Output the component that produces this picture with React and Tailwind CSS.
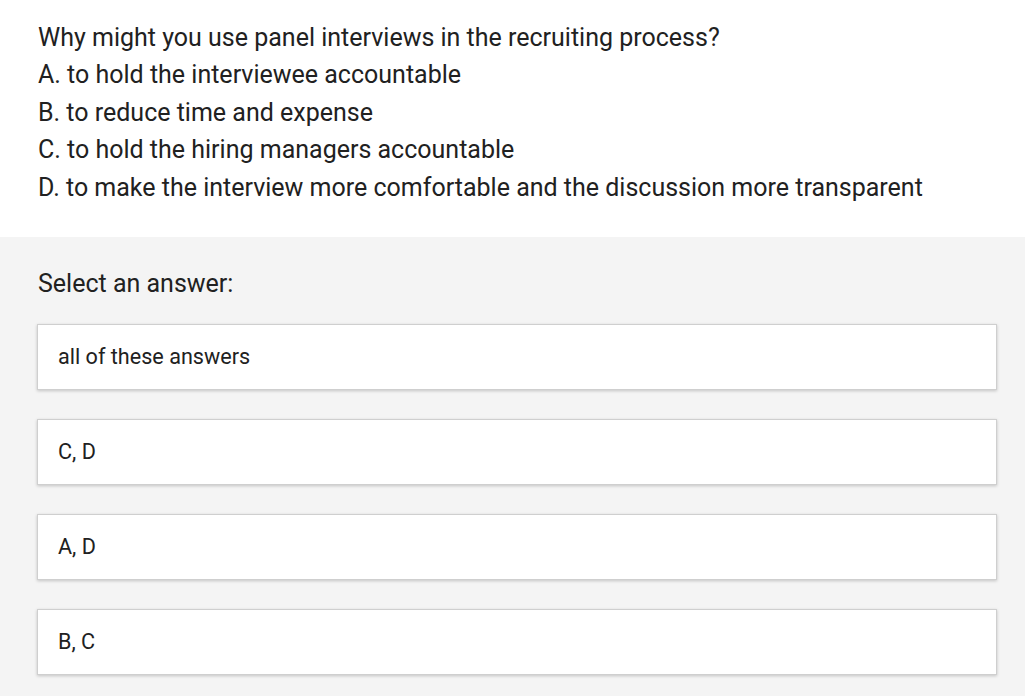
const choices = ['A. to hold the interviewee accountable', 'B. to reduce time and expense', 'C. to hold the hiring managers accountable', 'D. to make the interview more comfortable and the discussion more transparent'];

const answers = ['all of these answers', 'C, D', 'A, D', 'B, C'];

export default function App() {
  return (
    <div className="min-h-[696px] bg-[#f4f4f4] text-[#212121]" style={{ fontFamily: 'Roboto, "Noto Sans", sans-serif' }}>
      <div className="bg-white pl-[38px] pt-[19px] pb-[31px] text-[25px] leading-[37.4px]">
        <p>Why might you use panel interviews in the recruiting process?</p>
        {choices.map(c => <p key={c}>{c}</p>)}
      </div>

      <div className="pl-[37px] pr-[28px] pt-[28px] pb-[21px]">
        <p className="pl-[1px] text-[25px] leading-[37px] mb-[22px]">Select an answer:</p>
        <div className="flex flex-col gap-[29px]">
          {answers.map(a => (
            <button key={a} type="button"
              className="flex items-center h-[66px] px-[20px] bg-white border border-[#cfcfcf] shadow-[0_1px_3px_rgba(0,0,0,0.2)] text-left text-[21.6px]">
              {a}
            </button>
          ))}
        </div>
      </div>
    </div>
  );
}
